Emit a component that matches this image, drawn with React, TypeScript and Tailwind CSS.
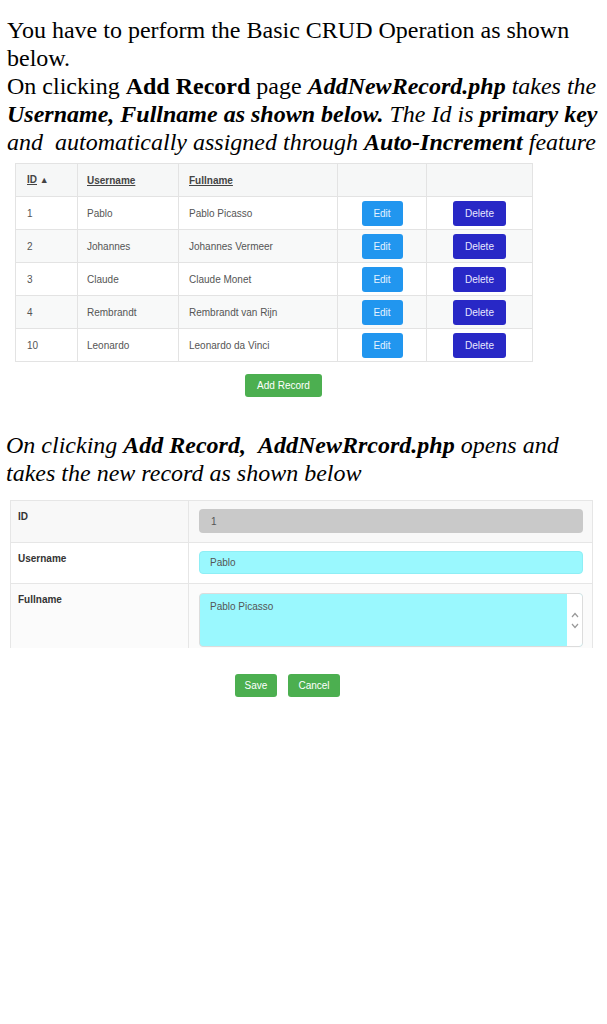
import React from 'react';

const rows = [
  { id: 1, user: 'Pablo', full: 'Pablo Picasso' },
  { id: 2, user: 'Johannes', full: 'Johannes Vermeer' },
  { id: 3, user: 'Claude', full: 'Claude Monet' },
  { id: 4, user: 'Rembrandt', full: 'Rembrandt van Rijn' },
  { id: 10, user: 'Leonardo', full: 'Leonardo da Vinci' },
];

const serif = "font-['Liberation_Serif','Times_New_Roman',serif]";
const sans = "font-['Liberation_Sans',Arial,sans-serif]";

function RecordsTable() {
  return (
    <table className={`ml-[15px] border-collapse text-[10px] text-[#555] ${sans}`}>
      <thead>
        <tr className="h-[33px] bg-[#f6f7f7]">
          <th className="w-[62px] border border-[#e3e3e3] pl-[11px] text-left font-bold text-[#444]">
            <span className="underline">ID</span> <span className="text-[9px]">▲</span>
          </th>
          <th className="w-[101px] border border-[#e3e3e3] pl-[9px] text-left font-bold text-[#444] underline">Username</th>
          <th className="w-[159px] border border-[#e3e3e3] pl-[10px] text-left font-bold text-[#444] underline">Fullname</th>
          <th className="w-[89px] border border-[#e3e3e3]"></th>
          <th className="w-[106px] border border-[#e3e3e3]"></th>
        </tr>
      </thead>
      <tbody>
        {rows.map((r, i) => (
          <tr key={r.id} className={`h-[33px] ${i % 2 === 1 ? 'bg-[#f8f9f9]' : 'bg-white'}`}>
            <td className="border border-[#e3e3e3] pl-[11px]">{r.id}</td>
            <td className="border border-[#e3e3e3] pl-[9px]">{r.user}</td>
            <td className="border border-[#e3e3e3] pl-[10px]">{r.full}</td>
            <td className="border border-[#e3e3e3] text-center">
              <button className="h-[25px] w-[41px] rounded-[3px] bg-[#2196ef] text-[10px] text-[#e6f2ff]">Edit</button>
            </td>
            <td className="border border-[#e3e3e3] text-center">
              <button className="h-[25px] w-[53px] rounded-[3px] bg-[#2828c6] text-[10px] text-[#e8e8ff]">Delete</button>
            </td>
          </tr>
        ))}
      </tbody>
    </table>
  );
}

function NewRecordForm() {
  return (
    <div className={`mx-[10px] w-[583px] border-x border-t border-[#e6e6e6] text-[10px] ${sans}`}>
      <div className="flex h-[42px] border-b border-[#e6e6e6] bg-[#f8f8f8]">
        <div className="w-[178px] border-r border-[#e6e6e6] pl-[7px] pt-[8px] font-bold text-[#333]">ID</div>
        <div className="flex-1 pl-[10px] pr-[9px] pt-[8px]">
          <div className="flex h-[24px] items-center rounded-[4px] bg-[#c9c9c9] pl-[12px] text-[#555]">1</div>
        </div>
      </div>
      <div className="flex h-[41px] border-b border-[#e6e6e6] bg-white">
        <div className="w-[178px] border-r border-[#e6e6e6] pl-[7px] pt-[8px] font-bold text-[#333]">Username</div>
        <div className="flex-1 pl-[10px] pr-[9px] pt-[8px]">
          <div className="flex h-[23px] items-center rounded-[4px] border border-[#8eeef5] bg-[#9af8fe] pl-[10px] text-[#555]">Pablo</div>
        </div>
      </div>
      <div className="flex h-[64px] bg-[#fbfbfb]">
        <div className="w-[178px] border-r border-[#e6e6e6] pl-[7px] pt-[8px] font-bold text-[#333]">Fullname</div>
        <div className="flex-1 pl-[10px] pr-[9px] pt-[9px]">
          <div className="flex h-[54px] overflow-hidden rounded-[4px] border border-[#dcdcdc] bg-[#9af8fe]">
            <div className="flex-1 pl-[10px] pt-[5px] text-[#555]">Pablo Picasso</div>
            <div className="flex w-[15px] flex-col items-center justify-center gap-[5px] bg-white">
              <svg width="8" height="6" viewBox="0 0 8 6" fill="none" stroke="#999" strokeWidth="1.2">
                <path d="M1 5 L4 1.5 L7 5" />
              </svg>
              <svg width="8" height="6" viewBox="0 0 8 6" fill="none" stroke="#999" strokeWidth="1.2">
                <path d="M1 1 L4 4.5 L7 1" />
              </svg>
            </div>
          </div>
        </div>
      </div>
    </div>
  );
}

export default function App() {
  return (
    <div className="min-h-[1024px] w-[607px] bg-white text-black">
      <div className={`pl-[7px] pt-[16px] text-[24px] leading-[28px] whitespace-nowrap ${serif}`}>
        <div>You have to perform the Basic CRUD Operation as shown</div>
        <div>below.</div>
        <div>
          On clicking <b>Add Record</b> page <b><i>AddNewRecord.php</i></b> <i>takes the</i>
        </div>
        <div className="italic">
          <b>Username, Fullname as shown below.</b> The Id is <b>primary key</b>
        </div>
        <div className="italic">
          and&nbsp; automatically assigned through <b>Auto-Increment</b> feature
        </div>
      </div>

      <div className="mt-[7px]">
        <RecordsTable />
      </div>

      <button className={`ml-[245px] mt-[12px] h-[23px] w-[77px] rounded-[3px] bg-[#4caf50] text-[10px] text-white ${sans}`}>
        Add Record
      </button>

      <div className={`mt-[34px] pl-[6px] text-[24px] italic leading-[28px] whitespace-nowrap ${serif}`}>
        On clicking <b>Add Record,</b>&nbsp; <b>AddNewRrcord.php</b> opens and
        <br />
        takes the new record as shown below
      </div>

      <div className="mt-[13px]">
        <NewRecordForm />
      </div>

      <div className={`ml-[235px] mt-[26px] flex gap-[11px] text-[10px] text-white ${sans}`}>
        <button className="h-[23px] w-[42px] rounded-[3px] bg-[#4caf50]">Save</button>
        <button className="h-[23px] w-[52px] rounded-[3px] bg-[#4caf50]">Cancel</button>
      </div>
    </div>
  );
}
